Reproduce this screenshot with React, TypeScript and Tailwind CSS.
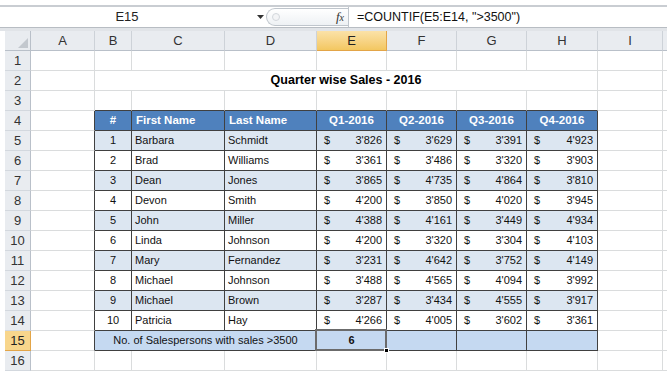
import React from "react";

const colW = ["w-[64px]", "w-[37px]", "w-[93px]", "w-[92px]", "w-[70px]", "w-[70px]", "w-[70px]", "w-[71px]", "w-[65px]"];
const letters = ["A", "B", "C", "D", "E", "F", "G", "H", "I"];

const rows = [
  ["1", "Barbara", "Schmidt", "3'826", "3'629", "3'391", "4'923"],
  ["2", "Brad", "Williams", "3'361", "3'486", "3'320", "3'903"],
  ["3", "Dean", "Jones", "3'865", "4'735", "4'864", "3'810"],
  ["4", "Devon", "Smith", "4'200", "3'850", "4'020", "3'945"],
  ["5", "John", "Miller", "4'388", "4'161", "3'449", "4'934"],
  ["6", "Linda", "Johnson", "4'200", "3'320", "3'304", "4'103"],
  ["7", "Mary", "Fernandez", "3'231", "4'642", "3'752", "4'149"],
  ["8", "Michael", "Johnson", "3'488", "4'565", "4'094", "3'992"],
  ["9", "Michael", "Brown", "3'287", "3'434", "4'555", "3'917"],
  ["10", "Patricia", "Hay", "4'266", "4'005", "3'602", "3'361"],
];

function RowHead({ n, active }: { n?: number; active?: boolean }) {
  return (
    <div
      className={`w-[26px] shrink-0 flex items-center justify-center border-r border-b text-[13px] ${
        active ? "bg-[#F8D68C] border-r-[#E3A548] border-b-[#E3A548] text-[#222]" : "bg-[#E9ECF0] border-r-[#B9C0C9] border-b-[#D3D8DE] text-[#333]"
      }`}
    >
      {n}
    </div>
  );
}

// plain empty grid cell
function Grid({ w, right }: { w: string; right?: boolean }) {
  return <div className={`${w} shrink-0 border-b border-b-[#DADCDD] border-r ${right ? "border-r-[#404040]" : "border-r-[#DADCDD]"}`} />;
}

function Tail() {
  return <div className="flex-1 border-b border-b-[#DADCDD]" />;
}

function EmptyRow({ n, bottomDark }: { n?: number; bottomDark?: boolean }) {
  return (
    <div className="flex h-[20px]">
      <RowHead n={n} />
      <Grid w={colW[0]} />
      {colW.slice(1, 8).map((w, i) => (
        <div
          key={i}
          className={`${w} shrink-0 border-r border-r-[#DADCDD] border-b ${bottomDark ? "border-b-[#404040]" : "border-b-[#DADCDD]"}`}
        />
      ))}
      <Grid w={colW[8]} />
      <Tail />
    </div>
  );
}

function Money({ v, w, bg }: { v: string; w: string; bg: string }) {
  return (
    <div className={`${w} shrink-0 ${bg} border-r border-b border-[#404040] flex items-center justify-between pl-[7px] pr-[4px]`}>
      <span>$</span>
      <span>{v}</span>
    </div>
  );
}

export default function App() {
  return (
    <div className="w-[667px] h-[375px] overflow-hidden bg-white text-[#111] text-[11px]" style={{ fontFamily: '"Liberation Sans", Arial, sans-serif' }}>
      {/* Formula bar */}
      <div className="h-[5px]" />
      <div className="h-[22px] border-t-2 border-[#C9CDD2] flex items-stretch">
        <div className="w-[254px] flex items-center justify-center text-[13px] text-[#222]">E15</div>
        <div className="w-[12px] flex items-center justify-center">
          <svg width="7" height="4" viewBox="0 0 7 4">
            <polygon points="0,0 7,0 3.5,4" fill="#333" />
          </svg>
        </div>
        <div className="w-[82px] my-[1px] rounded-l-full border border-r-0 border-[#BFC5CC] bg-gradient-to-b from-white to-[#EEF1F4] flex items-center justify-between pl-[5px] pr-[4px]">
          <div className="w-[8px] h-[8px] rounded-full border border-[#D3D7DC] bg-[#F3F4F6]" />
          <span className="italic text-[13px] text-[#333]" style={{ fontFamily: '"Liberation Serif", serif' }}>
            f<span className="text-[10px]">x</span>
          </span>
        </div>
        <div className="flex-1 border-l border-[#BFC5CC] flex items-center pl-[8px] text-[12.5px] text-[#111]">=COUNTIF(E5:E14, "&gt;3500")</div>
      </div>
      <div className="h-[4px] border-t border-[#B8BDC3] bg-[#E1E4E8]" />

      <div className="flex">
        <div className="w-[5px] shrink-0" />
        <div className="flex-1">
          {/* column headers */}
          <div className="flex h-[20px]">
            <div className="w-[26px] shrink-0 bg-[#E9ECF0] border-r border-b border-[#B9C0C9] relative">
              <svg className="absolute right-[2px] bottom-[2px]" width="10" height="10" viewBox="0 0 10 10">
                <polygon points="10,0 10,10 0,10" fill="#C3C8CE" />
              </svg>
            </div>
            {letters.map((l, i) => (
              <div
                key={l}
                className={`${colW[i]} shrink-0 flex items-center justify-center text-[13px] border-r border-b ${
                  l === "E"
                    ? "bg-gradient-to-b from-[#FBE2A8] to-[#F3C760] border-r-[#E3A548] border-b-[#E3A548] text-[#222]"
                    : "bg-[#E9ECF0] border-r-[#CDD2D8] border-b-[#B9C0C9] text-[#333]"
                }`}
              >
                {l}
              </div>
            ))}
            <div className="flex-1 bg-[#E9ECF0] border-b border-[#B9C0C9]" />
          </div>

          <EmptyRow n={1} />

          {/* row 2 title */}
          <div className="flex h-[20px]">
            <RowHead n={2} />
            <Grid w={colW[0]} />
            <div className="w-[503px] shrink-0 border-r border-b border-[#DADCDD] flex items-center justify-center font-bold text-[12.5px] text-black">
              Quarter wise Sales - 2016
            </div>
            <Grid w={colW[8]} />
            <Tail />
          </div>

          <EmptyRow n={3} bottomDark />

          {/* header row 4 */}
          <div className="flex h-[20px]">
            <RowHead n={4} />
            <Grid w={colW[0]} right />
            {["#", "First Name", "Last Name", "Q1-2016", "Q2-2016", "Q3-2016", "Q4-2016"].map((h, i) => (
              <div
                key={h}
                className={`${colW[i + 1]} shrink-0 bg-[#4F81BD] text-white font-bold text-[11.5px] border-r border-b border-[#404040] flex items-center ${
                  i === 1 || i === 2 ? "pl-[4px]" : "justify-center"
                }`}
              >
                {h}
              </div>
            ))}
            <Grid w={colW[8]} />
            <Tail />
          </div>

          {rows.map((r, idx) => {
            const bg = idx % 2 === 0 ? "bg-[#DCE6F1]" : "bg-white";
            return (
              <div key={idx} className="flex h-[20px]">
                <RowHead n={idx + 5} />
                <Grid w={colW[0]} right />
                <div className={`${colW[1]} shrink-0 ${bg} border-r border-b border-[#404040] flex items-center justify-center`}>{r[0]}</div>
                <div className={`${colW[2]} shrink-0 ${bg} border-r border-b border-[#404040] flex items-center pl-[3px]`}>{r[1]}</div>
                <div className={`${colW[3]} shrink-0 ${bg} border-r border-b border-[#404040] flex items-center pl-[3px]`}>{r[2]}</div>
                <Money v={r[3]} w={colW[4]} bg={bg} />
                <Money v={r[4]} w={colW[5]} bg={bg} />
                <Money v={r[5]} w={colW[6]} bg={bg} />
                <Money v={r[6]} w={colW[7]} bg={bg} />
                <Grid w={colW[8]} />
                <Tail />
              </div>
            );
          })}

          {/* row 15 summary */}
          <div className="flex h-[20px]">
            <RowHead n={15} active />
            <Grid w={colW[0]} right />
            <div className="w-[222px] shrink-0 bg-[#C5D9F1] border-r border-b border-[#404040] flex items-center justify-center">
              No. of Salespersons with sales &gt;3500
            </div>
            <div className={`${colW[4]} shrink-0 bg-[#C5D9F1] border-r border-b border-[#404040] flex items-center justify-center font-bold relative`}>
              6
              <div className="absolute -left-[2px] -top-[2px] -right-[1px] -bottom-[1px] border-2 border-[#6B6B6B]" />
              <div className="absolute -right-[3px] -bottom-[3px] w-[5px] h-[5px] bg-black border border-white" />
            </div>
            {colW.slice(5, 8).map((w, i) => (
              <div key={i} className={`${w} shrink-0 bg-[#C5D9F1] border-r border-b border-[#404040]`} />
            ))}
            <Grid w={colW[8]} />
            <Tail />
          </div>

          <EmptyRow n={16} />
          <div className="h-[4px]" />
        </div>
      </div>
    </div>
  );
}
